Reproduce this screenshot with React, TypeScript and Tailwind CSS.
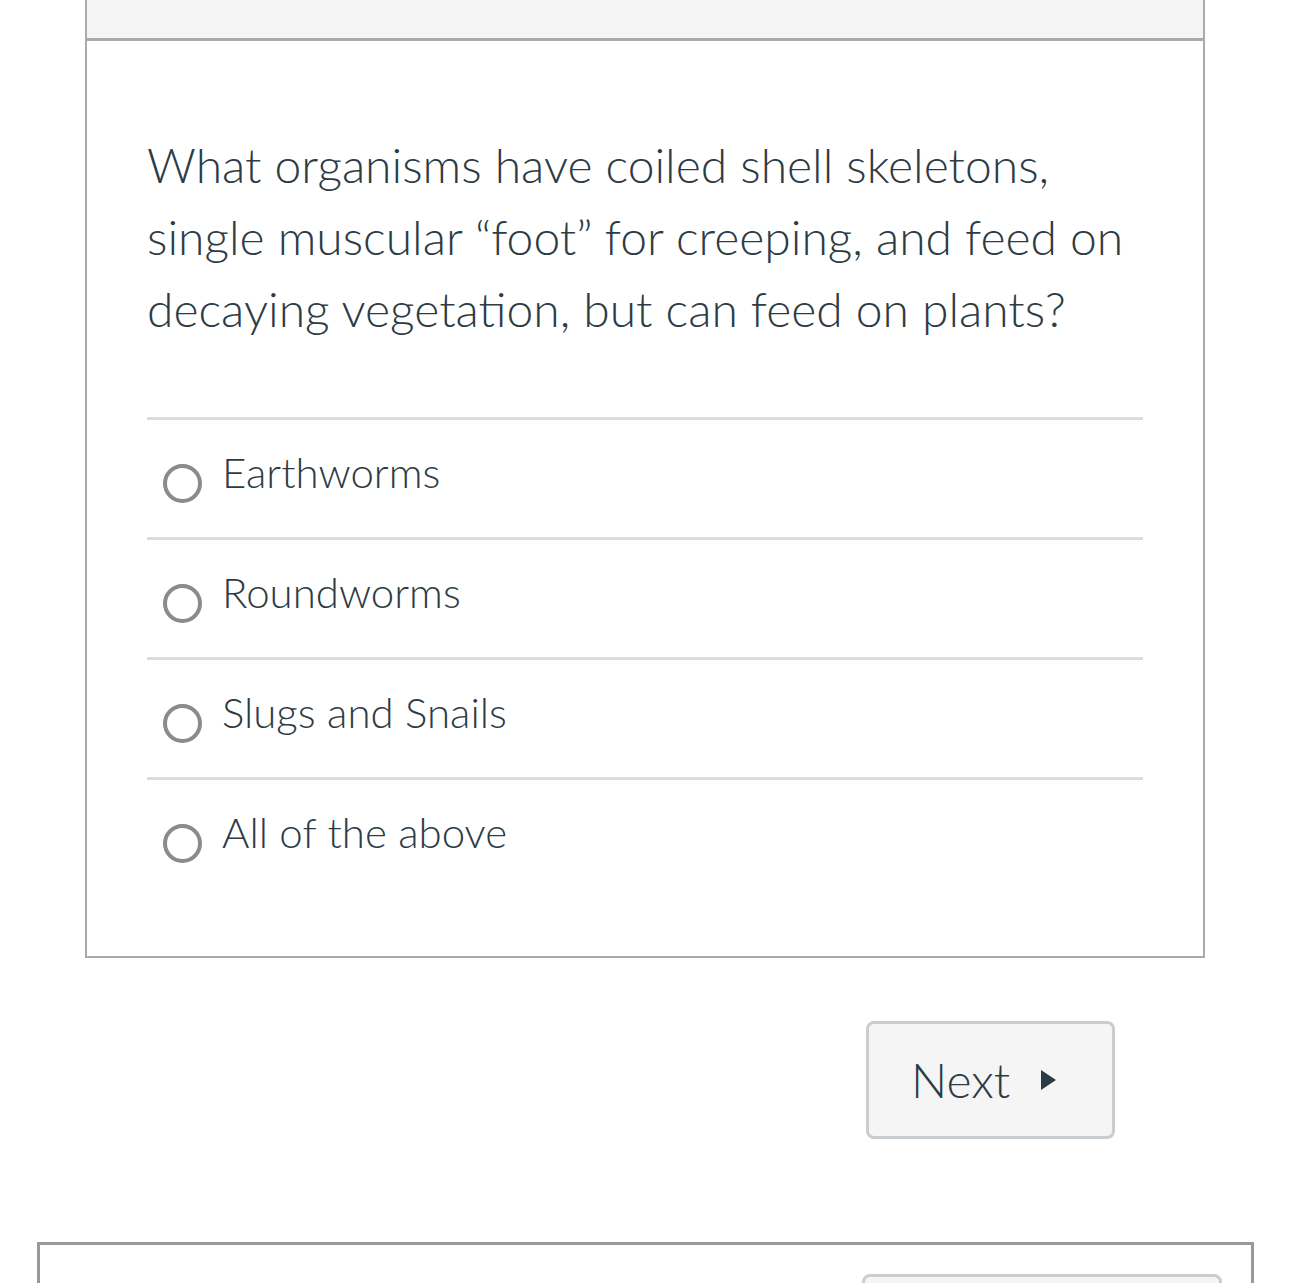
import React from "react";

const options = ["Earthworms", "Roundworms", "Slugs and Snails", "All of the above"];

export default function App() {
  return (
    <div className="min-h-screen w-full bg-white font-['Lato_Light','Lato','Noto_Sans',sans-serif] font-light text-[#2d3b45]">
      {/* Question card */}
      <div className="mx-auto w-[1120px] border-x-2 border-b-2 border-[#aaaaaa]">
        <div className="h-[41px] border-b-[3px] border-[#aaaaaa] bg-[#f5f5f5]" />
        <div className="px-[60px] pt-[88px] pb-[59px]">
          <p className="text-[48px] leading-[72px]">
            What organisms have coiled shell skeletons, single muscular “foot” for creeping, and feed on decaying
            vegetation, but can feed on plants?
          </p>
          <div className="mt-[72px]">
            {options.map((label) => (
              <label
                key={label}
                className="flex h-[120px] cursor-pointer items-start gap-[20px] border-t-[3px] border-[#dddddd] pt-[21px] pl-[16px]"
              >
                <span className="mt-[23px] h-[39px] w-[39px] shrink-0 rounded-full border-4 border-[#8b8b8b] bg-white" />
                <span className="text-[42px] leading-[63px]">{label}</span>
              </label>
            ))}
          </div>
        </div>
      </div>

      {/* Navigation */}
      <div className="mx-auto mt-[63px] flex w-[1120px] justify-end pr-[90px]">
        <button className="flex h-[118px] w-[249px] items-center rounded-[8px] border-[3px] border-[#c7cdd1] bg-[#f5f5f5] pl-[42px] text-[48px] font-light text-[#2d3b45]">
          <span className="leading-none">Next</span>
          <svg className="ml-[31px] h-[20px] w-[15px]" viewBox="0 0 15 20" fill="currentColor">
            <path d="M0 0 L15 10 L0 20 Z" />
          </svg>
        </button>
      </div>

      {/* Next section */}
      <div className="mx-auto mt-[103px] flex w-[1217px] justify-end border-x-[3px] border-t-[3px] border-[#999999] p-[29px]">
        <div className="h-[100px] w-[360px] rounded-[8px] border-[3px] border-[#c7cdd1] bg-[#f5f5f5]" />
      </div>
    </div>
  );
}
